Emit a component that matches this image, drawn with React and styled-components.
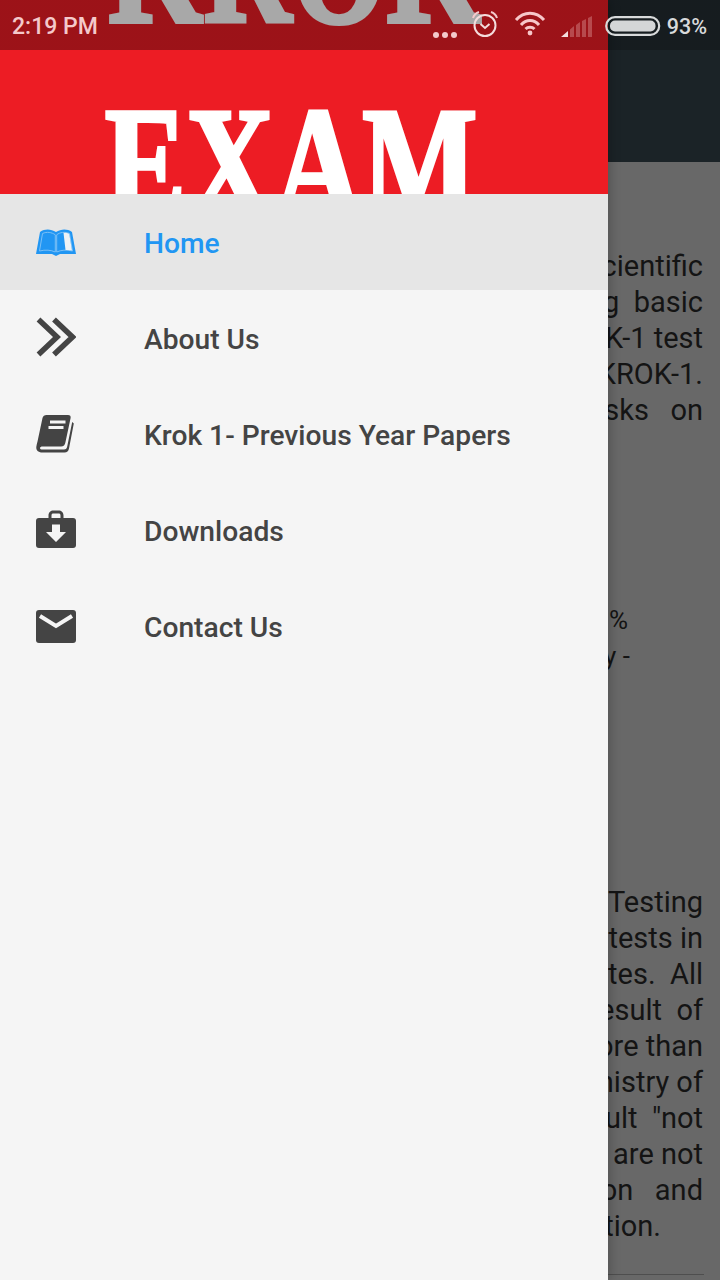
import React from "react";
import styled, { createGlobalStyle } from "styled-components";

const Global = createGlobalStyle`
  html, body { margin: 0; padding: 0; background: #686868; }
  * { box-sizing: border-box; }
`;
const Screen = styled.div`
  position: relative; width: 720px; height: 1280px; overflow: hidden;
  background: #686868; font-family: Roboto, "Liberation Sans", sans-serif;
`;
const AppBar = styled.div`height: 162px; background: #1b2327;`;
const Page = styled.div`
  display: flex; flex-direction: column; padding: 86px 17px 0 0;
  color: #141414; line-height: 36px;
`;
const Para = styled.div`
  display: flex; flex-direction: column; align-items: flex-end;
  margin-top: ${p => p.$top || 0}px;
`;
const Line = styled.span`
  white-space: pre; margin-right: ${p => p.$shift || 0}px;
  font-size: ${p => p.$size || 29}px;
`;
const Rule = styled.div`
  position: absolute; left: 608px; right: 16px; bottom: 5px; height: 1px; background: #4e4e4e;
`;
const Drawer = styled.aside`
  position: absolute; left: 0; top: 0; bottom: 0; width: 608px; background: #f5f5f5;
  box-shadow: 2px 0 10px rgba(0,0,0,.22);
`;
const Header = styled.header`
  height: 194px; background: #ed1c24; overflow: hidden;
  display: flex; flex-direction: column; align-items: center;
`;
const Logo = styled.div`
  font-family: "Liberation Serif", serif; font-weight: 700; color: #fff;
  font-size: 122px; line-height: 110px; height: 110px;
  -webkit-text-stroke: 3px #fff;
  transform: scaleY(1.32); transform-origin: 50% 100%;
  margin-top: ${p => p.$top}px; margin-left: ${p => p.$left || 0}px;
`;
const Nav = styled.nav`display: flex; flex-direction: column;`;
const Item = styled.div`
  height: 96px; display: flex; align-items: center; padding-left: 36px; gap: 68px;
  background: ${p => p.$active ? "#e6e6e6" : "transparent"};
  color: ${p => p.$active ? "#2196f3" : "#444"};
  font-size: 28.2px; font-weight: 500;
`;
const Label = styled.span`padding-top: 3px;`;
const IconBox = styled.svg`width: 40px; height: 40px; flex: none; margin-top: -2px; display: block;`;
const StatusBar = styled.div`
  position: absolute; left: 0; top: 0; width: 720px; height: 50px;
  display: flex; align-items: center; padding: 0 13px 0 12px;
  background: linear-gradient(to right, rgba(0,0,0,.34) 608px, rgba(0,0,0,.2) 608px);
  color: #f4c9cb; font-size: 23px; font-weight: 500;
`;
const Time = styled.span`margin-right: auto; padding-top: 2px;`;
const Percent = styled.span`color: #d8dadb; font-size: 21.5px; margin-left: 6px; padding-top: 2px;`;
const StatusIcon = styled.svg`
  display: block; flex: none; margin-left: ${p => p.$gap || 0}px; margin-top: ${p => p.$top || 0}px;
`;

const BookOpen = () => (
  <IconBox viewBox="0 0 40 40">
    <path d="M0 33 L4 11 C9 7.500 15 8 20 11 C25 8 31 7.500 36 11 L40 33 L24 33 L20 35 L16 33 Z" fill="#2196f3"/>
    <path d="M3.500 30 L6.500 12.500 C11 10.500 15.500 11.200 19.300 13.800 L19.300 31 C15 29 9.500 28.500 3.500 30Z" fill="#2196f3" stroke="#7cc0f6" strokeWidth="1"/>
    <path d="M20.700 13.800 C24 11.200 29 10.500 33.500 12.500 L36.500 30 C30.500 28.500 25 29 20.700 31Z" fill="#2196f3" stroke="#7cc0f6" strokeWidth="1"/>
    <path d="M27.500 11.800 C29.500 11.500 31.500 11.900 33.200 12.700 L36 29.500 C34 29 31.500 28.800 29.500 28.900Z" fill="#eef2f5"/>
  </IconBox>
);
const Chevrons = () => (
  <IconBox viewBox="0 0 40 40">
    <path d="M2.500 2.500 L21 20 L2.500 37.500 M18 2.500 L36.500 20 L18 37.500" fill="none" stroke="#444" strokeWidth="5.500"/>
  </IconBox>
);
const BookClosed = () => (
  <IconBox viewBox="0 0 40 40">
    <path d="M10.500 2 H32 C34 2 35 3 34.600 5 L29.500 29 C29 32 27.500 33.500 25 33.500 H7 C4.800 33.500 4 34.200 4 35 C4 36 5 36.500 6.500 36.500 H28 C30 36.500 30.800 35.500 31.200 33.500 L36.200 9 L37.800 10.500 L33 35.500 C32.500 38 31 39.500 28.500 39.500 H6.500 C2 39.500 0 37 0.300 34 C0.500 32 1 30.500 1.500 28.500 L6.500 5 C7 3 8.500 2 10.500 2Z" fill="#444"/>
    <path d="M14 9 H29.500 M12.500 14.500 H27.500" stroke="#f5f5f5" strokeWidth="2.800"/>
  </IconBox>
);
const Bag = () => (
  <IconBox viewBox="0 0 40 40">
    <path d="M12.500 9 V6.500 C12.500 3.500 14.500 1.500 17.500 1.500 H22.500 C25.500 1.500 27.500 3.500 27.500 6.500 V9 H24.500 V6.500 C24.500 5 23.800 4.500 22.500 4.500 H17.500 C16.200 4.500 15.500 5 15.500 6.500 V9Z" fill="#444"/>
    <rect x="0" y="9" width="40" height="30" rx="3" fill="#444"/>
    <path d="M16 15.500 H24 V23 H30 L20 33 L10 23 H16Z" fill="#f5f5f5"/>
  </IconBox>
);
const Mail = () => (
  <IconBox viewBox="0 0 40 40">
    <rect x="0" y="5" width="40" height="33" rx="3" fill="#444"/>
    <path d="M4 11 L20 21 L36 11" fill="none" stroke="#f5f5f5" strokeWidth="4"/>
  </IconBox>
);

const items = [
  { label: "Home", Icon: BookOpen, active: true },
  { label: "About Us", Icon: Chevrons },
  { label: "Krok 1- Previous Year Papers", Icon: BookClosed },
  { label: "Downloads", Icon: Bag },
  { label: "Contact Us", Icon: Mail },
];
const first = ["scientific", "using  basic", "KROK-1 test", "KROK-1.", "tasks   on"];
const last = ["Testing", "tests in", "minutes.  All", "result  of", "more than", "Ministry of", "result  \"not", "are not", "ion   and", "ation."];

export default function App() {
  return (
    <Screen>
      <Global />
      <AppBar />
      <Page>
        <Para>{first.map(t => <Line key={t}>{t}</Line>)}</Para>
        <Para $top={174}>
          <Line $shift={75} $size={26}>%</Line>
          <Line $shift={73} $size={26}>y -</Line>
        </Para>
        <Para $top={210}>
          {last.map((t, i) => <Line key={t} $shift={i === 9 ? 42 : 0}>{t}</Line>)}
        </Para>
      </Page>
      <Rule />
      <Drawer>
        <Header>
          <Logo $top={-70} $left={-18}>KROK</Logo>
          <Logo $top={86} $left={-26}>EXAM</Logo>
        </Header>
        <Nav>
          {items.map(({ label, Icon, active }) => (
            <Item key={label} $active={active}><Icon /><Label>{label}</Label></Item>
          ))}
        </Nav>
      </Drawer>
      <StatusBar>
        <Time>2:19 PM</Time>
        <StatusIcon $top={20} width="26" height="8" viewBox="0 0 26 8">
          <circle cx="4" cy="4" r="3" fill="#f4c9cb"/><circle cx="13" cy="4" r="3" fill="#f4c9cb"/><circle cx="22" cy="4" r="3" fill="#f4c9cb"/>
        </StatusIcon>
        <StatusIcon $gap={13} $top={-2} width="28" height="28" viewBox="0 0 28 28">
          <circle cx="14" cy="15.500" r="10.500" fill="none" stroke="#f4dcdc" strokeWidth="2"/>
          <path d="M9.500 14 L14 18 L18.500 14" fill="none" stroke="#f4dcdc" strokeWidth="2"/>
          <path d="M2 8 C3 5 5 3 8 2 M26 8 C25 5 23 3 20 2" fill="none" stroke="#f4c9cb" strokeWidth="2"/>
        </StatusIcon>
        <StatusIcon $gap={15} $top={-4} width="32" height="26" viewBox="0 0 32 26">
          <path d="M2 10 C10 1 22 1 30 10 M7 15 C12 9 20 9 25 15 M11.500 19 C14 16.500 18 16.500 20.500 19" fill="none" stroke="#f7c7c9" strokeWidth="3"/>
          <circle cx="16" cy="23" r="2.400" fill="#f7c7c9"/>
        </StatusIcon>
        <StatusIcon $gap={15} $top={3} width="32" height="22" viewBox="0 0 32 22">
          <path d="M0 21 L7 15 V21Z" fill="#f4dcdc"/>
          <path d="M9 13.500 L13 10 V21 H9Z M15 9 L19 6 V21 H15Z M21 5 L25 3 V21 H21Z M27 2 L31 0 V21 H27Z" fill="#f4c9cb" opacity=".3"/>
        </StatusIcon>
        <StatusIcon $gap={12} $top={1} width="56" height="20" viewBox="0 0 56 20">
          <rect x="1.200" y="1.200" width="53" height="17.600" rx="8.800" fill="none" stroke="#d8dadb" strokeWidth="2.200"/>
          <rect x="5" y="4.500" width="45.500" height="11" rx="5" fill="#d4d6d7"/>
        </StatusIcon>
        <Percent>93%</Percent>
      </StatusBar>
    </Screen>
  );
}
